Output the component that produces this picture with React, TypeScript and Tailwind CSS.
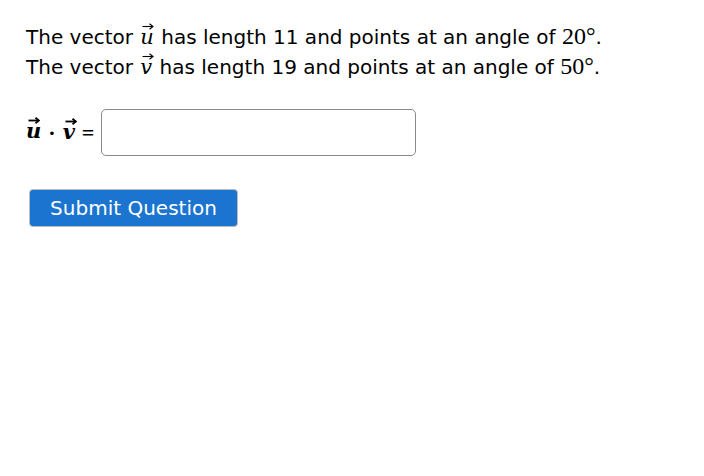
import React from "react";

function Vec({ ch, bold = false }: { ch: string; bold?: boolean }) {
  return (
    <span
      className="relative inline-block text-[21px] leading-[24px] px-[1px]"
      style={{ fontFamily: '"DejaVu Serif", serif' }}
    >
      <span className={`italic ${bold ? "font-bold" : ""}`}>{ch}</span>
      <svg className="absolute left-[3px] top-[-2px]" width="12" height="7" viewBox="0 0 12 7">
        <path d="M0.5 3.5 H10" stroke="#000" strokeWidth={bold ? 1.8 : 1.1} fill="none" />
        <path d="M7.5 0.8 L11 3.5 L7.5 6.2" stroke="#000" strokeWidth={bold ? 1.8 : 1.1} fill="none" />
      </svg>
    </span>
  );
}

function Num({ s }: { s: string }) {
  return (
    <span className="text-[24px] leading-none" style={{ fontFamily: '"Liberation Serif", serif' }}>{s}</span>
  );
}

export default function App() {
  return (
    <div
      className="bg-white text-black pl-[26px] pt-[22px]"
      style={{ fontFamily: '"DejaVu Sans", sans-serif' }}
    >
      <div className="text-[20px] leading-[30px]">
        <div>
          The vector <Vec ch="u" /> has length 11 and points at an angle of <Num s="20°" />.
        </div>
        <div>
          The vector <Vec ch="v" /> has length 19 and points at an angle of <Num s="50°" />.
        </div>
      </div>
      <div className="flex items-center mt-[26px] h-[48px]">
        <span className="flex items-center">
          <span className="-ml-[1px]"><Vec ch="u" bold /></span>
          <span className="mx-[6px] text-[22px] font-bold" style={{ fontFamily: '"Liberation Serif", serif' }}>·</span>
          <Vec ch="v" bold />
          <span className="ml-[6px] text-[22px] font-bold" style={{ fontFamily: '"Liberation Serif", serif' }}>=</span>
        </span>
        <input
          className="ml-[7px] w-[315px] h-[47px] border border-[#8a8a8a] rounded-[5px] outline-none"
          type="text"
        />
      </div>
      <button
        className="mt-[33px] ml-[3px] w-[209px] h-[38px] bg-[#1b74d0] text-white text-[20px] rounded-[4px] border border-[#bcbcbc] flex items-center justify-center"
      >
        Submit Question
      </button>
    </div>
  );
}
